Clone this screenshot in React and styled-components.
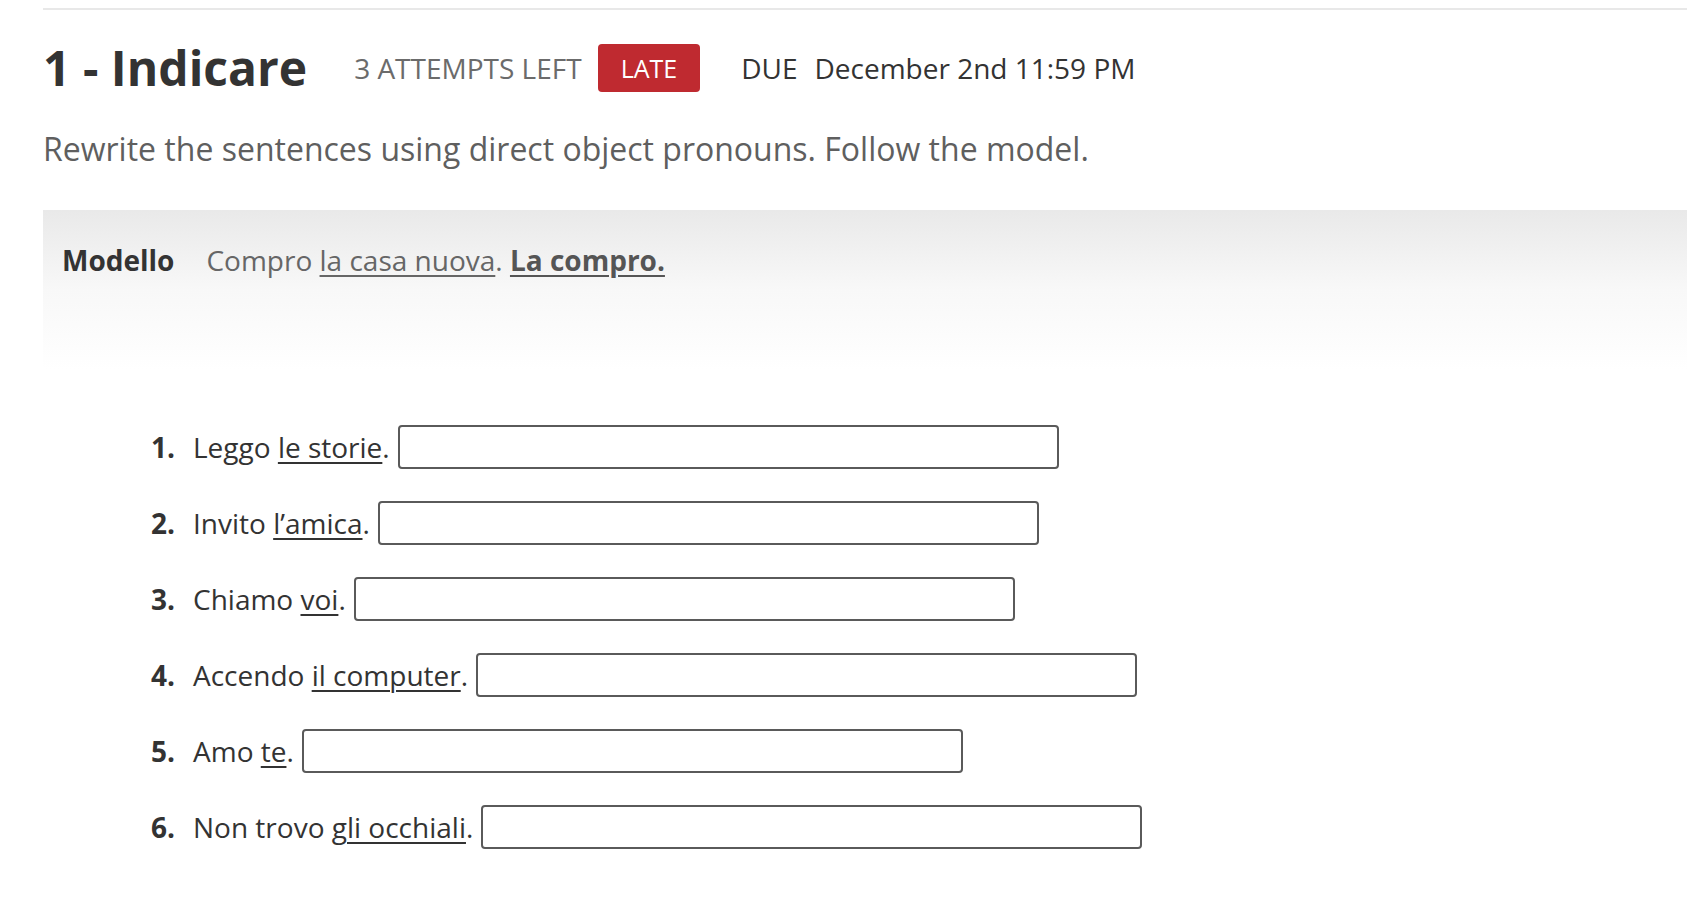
import React from 'react';
import styled, { createGlobalStyle } from "styled-components";

const GlobalStyle = createGlobalStyle`
  body {
    margin: 0;
    background: #fff;
    font-family: "Open Sans", "Liberation Sans", sans-serif;
  }
`;

const items = [
  { n: 1, before: "Leggo ", obj: "le storie" },
  { n: 2, before: "Invito ", obj: "l’amica" },
  { n: 3, before: "Chiamo ", obj: "voi" },
  { n: 4, before: "Accendo ", obj: "il computer" },
  { n: 5, before: "Amo ", obj: "te" },
  { n: 6, before: "Non trovo ", obj: "gli occhiali" },
];

const App = () => {
  return (
    <>
      <GlobalStyle />
      <Page>
        <Container>
          <Header>
            <Title>1 - Indicare</Title>
            <Attempts>3 ATTEMPTS LEFT</Attempts>
            <Badge>LATE</Badge>
            <Due>
              <DueLabel>DUE</DueLabel>
              <span>December 2nd 11:59 PM</span>
            </Due>
          </Header>
          <Instructions>
            Rewrite the sentences using direct object pronouns. Follow the model.
          </Instructions>
          <ModelBox>
            <ModelLabel>Modello</ModelLabel>
            <ModelText>
              Compro <u>la casa nuova</u>. <Answer>La compro.</Answer>
            </ModelText>
          </ModelBox>
          <List>
            {items.map((item) => (
              <Row key={item.n}>
                <Num>{item.n}.</Num>
                <Sentence>
                  {item.before}
                  <u>{item.obj}</u>.
                </Sentence>
                <Field type="text" />
              </Row>
            ))}
          </List>
        </Container>
      </Page>
    </>
  );
};

const Page = styled.div`
  padding: 8px 0 40px 43px;
`;
const Container = styled.div`
  border-top: 2px solid #e8e8e8;
`;
const Header = styled.div`
  display: flex;
  align-items: center;
  margin-top: 33px;
  height: 50px;
`;
const Title = styled.h1`
  margin: 0;
  font-size: 48px;
  line-height: 1;
  font-weight: 700;
  color: #333;
  margin-right: 47px;
`;
const Attempts = styled.div`
  font-size: 28px;
  color: #6b6b6b;
  margin-right: 16px;
`;
const Badge = styled.div`
  height: 48px;
  line-height: 48px;
  padding: 0 23px;
  background: #bf2a30;
  color: #fff;
  border-radius: 4px;
  font-size: 25px;
  margin-right: 41px;
`;
const Due = styled.div`
  font-size: 28px;
  color: #333;
  display: flex;
  gap: 17px;
`;
const DueLabel = styled.span``;
const Instructions = styled.p`
  margin: 34px 0 0;
  font-size: 32px;
  line-height: 43px;
  color: #5f5f5f;
`;
const ModelBox = styled.div`
  margin-top: 40px;
  height: 160px;
  box-sizing: border-box;
  padding: 31px 19px 0;
  background: linear-gradient(to bottom, #e9e9e9 0%, #f8f8f8 50%, #ffffff 100%);
  display: flex;
  align-items: baseline;
  gap: 32px;
  font-size: 28px;
`;
const ModelLabel = styled.div`
  font-weight: 700;
  color: #333;
`;
const ModelText = styled.div`
  color: #666;
  u {
    text-decoration-thickness: 2px;
    text-underline-offset: 4px;
  }
`;
const Answer = styled.span`
  font-weight: 700;
  color: #555;
  text-decoration: underline;
  text-decoration-thickness: 2px;
  text-underline-offset: 4px;
`;
const List = styled.div`
  margin-top: 55px;
  padding-left: 108px;
  display: flex;
  flex-direction: column;
  gap: 32px;
`;
const Row = styled.div`
  display: flex;
  align-items: center;
  font-size: 28px;
  color: #333;
`;
const Num = styled.span`
  font-weight: 700;
  width: 42px;
`;
const Sentence = styled.span`
  u {
    text-decoration-thickness: 2px;
    text-underline-offset: 4px;
  }
`;
const Field = styled.input`
  margin-left: 8px;
  width: 661px;
  height: 44px;
  box-sizing: border-box;
  border: 2px solid #5a5a5a;
  border-radius: 4px;
  background: #fff;
  font-size: 24px;
  font-family: inherit;
  padding: 0 8px;
  outline: none;
`;

export default App;
